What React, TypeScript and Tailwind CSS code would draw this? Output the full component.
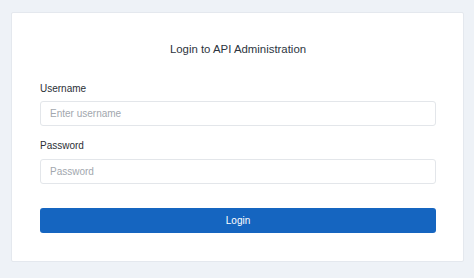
import React from "react";

export default function App() {
  return (
    <div
      className="min-h-screen w-full bg-[#eef2f7] pt-[12px] pl-[11px]"
      style={{ fontFamily: '"Liberation Sans", Arial, sans-serif' }}
    >
      <div className="w-[453px] h-[250px] bg-white border border-[#e4e8ee] rounded-[2px] pl-[28px] pr-[27px] pt-[29px] pb-[28px] flex flex-col">
        <h1 className="text-[11.4px] leading-[14px] text-[#2c3440] text-center font-normal">
          Login to API Administration
        </h1>
        <label className="mt-[27px] text-[10px] leading-[12px] text-[#2b2f36]">Username</label>
        <input
          type="text"
          placeholder="Enter username"
          className="mt-[6px] h-[25px] w-full border border-[#e3e6ea] rounded-[3px] px-[9px] text-[10px] text-[#333] placeholder:text-[#a2a7ae] outline-none bg-white"
        />
        <label className="mt-[14px] text-[10px] leading-[12px] text-[#2b2f36]">Password</label>
        <input
          type="password"
          placeholder="Password"
          className="mt-[7px] h-[25px] w-full border border-[#e3e6ea] rounded-[3px] px-[9px] text-[10px] text-[#333] placeholder:text-[#a2a7ae] outline-none bg-white"
        />
        <button className="mt-[24px] h-[25px] w-full rounded-[3px] bg-[#1565c0] text-white text-[10px] leading-[12px]">
          Login
        </button>
      </div>
    </div>
  );
}
